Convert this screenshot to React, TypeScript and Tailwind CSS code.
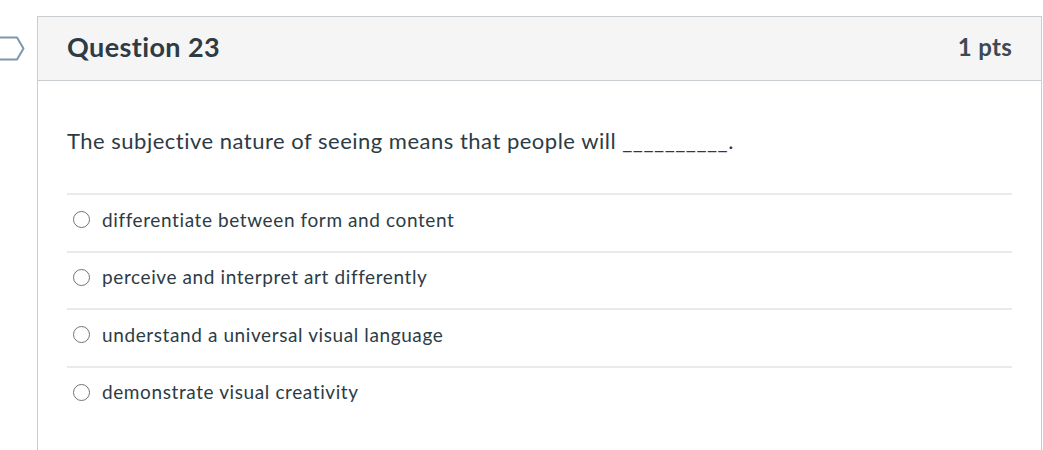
import React from 'react'

const answers = [
  'differentiate between form and content',
  'perceive and interpret art differently',
  'understand a universal visual language',
  'demonstrate visual creativity',
]

export default function App() {
  return (
    <div className="min-h-[450px] bg-white pt-[16px] flex font-['Lato',sans-serif] text-[#2d3b45] overflow-hidden">
      {/* bookmark flag sits in the gutter */}
      <div className="w-[37px] shrink-0 pt-[20px]">
        <svg width="26" height="25" viewBox="0 0 26 25" className="block">
          <path d="M-4 1.5 H17 L23.5 12.5 L17 23.5 H-4" fill="none" stroke="#7d97ad" strokeWidth="2" strokeLinejoin="round" />
        </svg>
      </div>

      <div className="flex-1 mr-[1px] border border-[#c7cdd1] border-b-0 min-h-[440px]">
        <div className="h-[64px] bg-[#f5f5f5] border-b border-[#c7cdd1] px-[29px] pb-[3px] flex items-center justify-between">
          <h2 className="text-[27px] font-bold tracking-[0.4px]">Question 23</h2>
          <div className="text-[24px] font-bold tracking-[0.3px] text-[#3d4a53]">1 pts</div>
        </div>

        <div className="px-[29px] pt-[46px]">
          <p className="text-[22px] leading-[28px] tracking-[0.5px] mb-[38px]">
            The subjective nature of seeing means that people will __________.
          </p>

          {answers.map((a) => (
            <label key={a} className="flex items-center border-t-2 border-[#e8eaec] h-[57.5px] pb-[6px]">
              <span className="ml-[6px] w-[17px] h-[17px] rounded-full border-[1.5px] border-[#737373] bg-white shrink-0" />
              <span className="ml-[12px] text-[19px] leading-[26px] tracking-[0.6px]">{a}</span>
            </label>
          ))}
        </div>
      </div>
    </div>
  )
}
